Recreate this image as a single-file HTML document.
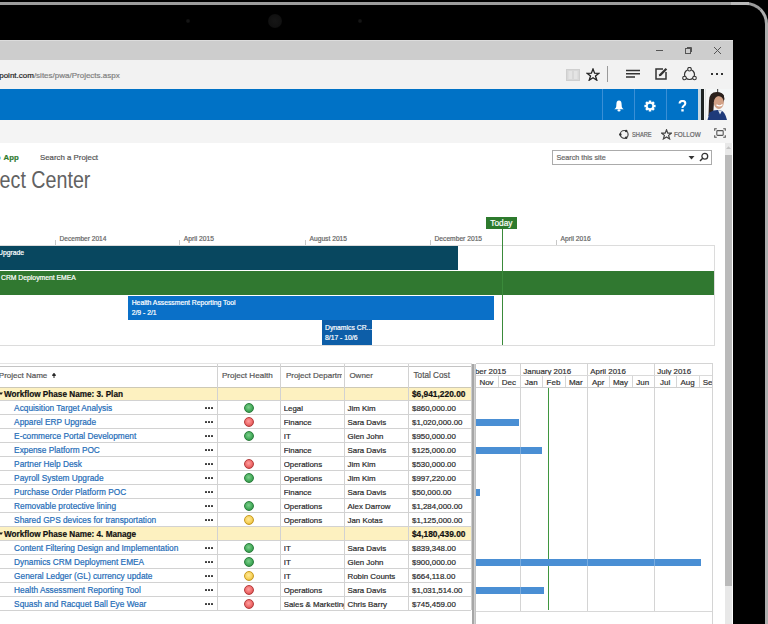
<!DOCTYPE html>
<html><head><meta charset="utf-8"><style>
html,body{margin:0;padding:0;}
body{width:768px;height:624px;overflow:hidden;background:#000;position:relative;font-family:"Liberation Sans", sans-serif;}
.r{position:absolute;}
.t{position:absolute;line-height:1;white-space:nowrap;-webkit-text-stroke:0.2px currentColor;}
</style></head><body>
<div class="r" style="left:-10px;top:2px;width:778px;height:700px;box-sizing:border-box;border-top:3px solid #9c9c9c;border-right:3.5px solid #adadad;border-top-right-radius:22px;"></div>
<div class="r" style="left:731px;top:2px;width:18px;height:3px;background:#b9b9b9;"></div>
<div class="r" style="left:268px;top:14px;width:14px;height:14px;border-radius:50%;background:radial-gradient(circle,#161616 0%,#111 60%,#060606 100%)"></div>
<div class="r" style="left:186px;top:19px;width:4px;height:4px;border-radius:50%;background:radial-gradient(circle,#181818,#0a0a0a)"></div>
<div class="r" style="left:358px;top:19px;width:4px;height:4px;border-radius:50%;background:radial-gradient(circle,#181818,#0a0a0a)"></div>
<div class="r" style="left:0px;top:40px;width:733px;height:584px;background:#ffffff;"></div>
<div class="r" style="left:0px;top:40px;width:733px;height:20px;background:#cdcdcd;"></div>
<div class="r" style="left:0px;top:40px;width:733px;height:1px;background:#dcdcdc;"></div>
<div class="r" style="left:0px;top:60px;width:733px;height:29px;background:#f2f2f2;"></div>
<div class="r" style="left:0px;top:89px;width:733px;height:31px;background:#0072c6;"></div>
<div class="r" style="left:0px;top:120px;width:733px;height:23px;background:#f4f4f4;"></div>
<div class="r" style="left:655.5px;top:50px;width:7px;height:1px;background:#555;"></div>
<svg class="r" style="left:684px;top:46px" width="9" height="9"><rect x="1.5" y="2.5" width="5" height="5" fill="none" stroke="#555" stroke-width="1"/><path d="M3 1.5H7.5V6" fill="none" stroke="#555" stroke-width="1"/></svg>
<svg class="r" style="left:713px;top:46px" width="9" height="9"><path d="M1 1L8 8M8 1L1 8" stroke="#555" stroke-width="1"/></svg>
<div class="t" style="left:-0.8px;top:71.80px;font-size:8px;color:#222">point.com<span style="color:#808080">/sites/pwa/Projects.aspx</span></div>
<svg class="r" style="left:566px;top:69px" width="14" height="12"><rect x="0.5" y="0.5" width="13" height="11" fill="#d8d8d8" stroke="#cfcfcf"/><rect x="2.5" y="2" width="3.5" height="8" fill="#e4e4e4"/><rect x="8" y="2" width="3.5" height="8" fill="#e4e4e4"/></svg>
<svg class="r" style="left:586px;top:67.5px" width="14" height="13"><path d="M7 1L8.6 5.2L13 5.3L9.5 8L10.8 12.2L7 9.7L3.2 12.2L4.5 8L1 5.3L5.4 5.2Z" fill="none" stroke="#222" stroke-width="1.3" stroke-linejoin="miter"/></svg>
<div class="r" style="left:606.5px;top:66px;width:1px;height:16px;background:#9a9a9a;"></div>
<svg class="r" style="left:625px;top:69px" width="16" height="10"><path d="M1 1.5H15M1 4.75H15M1 8H10" stroke="#333" stroke-width="1.3"/></svg>
<svg class="r" style="left:655px;top:66.5px" width="13" height="13"><path d="M8 2H1V12H11V5" fill="none" stroke="#333" stroke-width="1.5"/><path d="M3.8 9.2L4.3 7.3L10.6 1L12.2 2.6L5.9 8.9Z" fill="#333"/></svg>
<svg class="r" style="left:682px;top:67px" width="15" height="14"><circle cx="7.5" cy="7.5" r="5" fill="none" stroke="#333" stroke-width="1.2"/><circle cx="7.5" cy="2.2" r="1.8" fill="#f2f2f2" stroke="#333" stroke-width="1.1"/><circle cx="2.5" cy="11" r="1.8" fill="#f2f2f2" stroke="#333" stroke-width="1.1"/><circle cx="12.5" cy="11" r="1.8" fill="#f2f2f2" stroke="#333" stroke-width="1.1"/></svg>
<div class="r" style="left:711.25px;top:73.25px;width:1.5px;height:1.5px;background:#333;"></div>
<div class="r" style="left:716.25px;top:73.25px;width:1.5px;height:1.5px;background:#333;"></div>
<div class="r" style="left:721.25px;top:73.25px;width:1.5px;height:1.5px;background:#333;"></div>
<div class="r" style="left:602px;top:89px;width:1px;height:31px;background:#3a8fd6;"></div>
<div class="r" style="left:634px;top:89px;width:1px;height:31px;background:#3a8fd6;"></div>
<div class="r" style="left:666px;top:89px;width:1px;height:31px;background:#3a8fd6;"></div>
<svg class="r" style="left:613.5px;top:99.5px" width="10" height="12"><path d="M5 0.4C3.1 0.4 2.4 2 2.4 4.2L2.2 6.8C2 8 1.1 8.7 0.3 9.3H9.7C8.9 8.7 8 8 7.8 6.8L7.6 4.2C7.6 2 6.9 0.4 5 0.4Z" fill="#fff"/><ellipse cx="5" cy="10.4" rx="1.6" ry="1.1" fill="#fff"/></svg>
<svg class="r" style="left:644px;top:99.5px" width="12" height="12"><g fill="#fff" transform="translate(6 6)"><circle r="4.1"/><rect x="-1.3" y="-5.6" width="2.6" height="11.2" rx="0.4"/><rect x="-1.3" y="-5.6" width="2.6" height="11.2" rx="0.4" transform="rotate(45)"/><rect x="-1.3" y="-5.6" width="2.6" height="11.2" rx="0.4" transform="rotate(90)"/><rect x="-1.3" y="-5.6" width="2.6" height="11.2" rx="0.4" transform="rotate(135)"/></g><circle cx="6" cy="6" r="2.3" fill="#0072c6"/></svg>
<svg class="r" style="left:677.5px;top:99.5px" width="9" height="12"><path d="M1.6 3.6C1.6 1.9 2.8 1 4.4 1C6.1 1 7.3 1.9 7.3 3.5C7.3 4.8 6.4 5.4 5.5 6C4.8 6.5 4.5 6.9 4.5 8" fill="none" stroke="#fff" stroke-width="2.1"/><rect x="3.3" y="9.2" width="2.4" height="2.3" fill="#fff"/></svg>
<div class="r" style="left:698px;top:89px;width:35px;height:31px;background:#f4f6f6;"></div>
<div class="r" style="left:698px;top:89px;width:3px;height:31px;background:#c9d8e2;"></div>
<div class="r" style="left:701px;top:89px;width:3px;height:31px;background:#1d2424;"></div>
<div class="r" style="left:704.5px;top:89px;width:1px;height:31px;background:#dfe4e4;"></div>
<svg class="r" style="left:704.5px;top:89px" width="28" height="31"><rect x="12" y="0" width="1.2" height="4" fill="#555"/><path d="M3.5 27L4 12Q4 3 12 3Q19 3 19.5 10L18 14L9 13L8 27Z" fill="#2b211d"/><ellipse cx="13.8" cy="13.5" rx="5" ry="6.4" fill="#d2a186"/><path d="M8.5 9Q11 5.5 18.5 8.5L18.8 6Q15 2.5 10 4Z" fill="#2b211d"/><path d="M11.5 15.8Q14.5 18.2 17.5 15.5" stroke="#fff" stroke-width="1.3" fill="none"/><path d="M2.5 31L4.5 23.5Q10 20 16 21.5Q20 22.5 22 31Z" fill="#1e3a7a"/><path d="M13 21.2L15 25.5L17 21.8Z" fill="#dfe6ef"/></svg>
<svg class="r" style="left:618.5px;top:129px" width="11" height="11"><circle cx="5.2" cy="5.4" r="3.9" fill="none" stroke="#444" stroke-width="1.2"/><circle cx="7.2" cy="2" r="1.25" fill="#333"/><circle cx="1.3" cy="5.4" r="1.25" fill="#333"/><circle cx="7.2" cy="8.8" r="1.25" fill="#333"/></svg>
<div class="t" style="left:632.00px;top:131.80px;font-size:6.8px;color:#666;font-weight:400;transform:scaleX(0.84);transform-origin:left top;">SHARE</div>
<svg class="r" style="left:661px;top:129px" width="11" height="11"><path d="M5.5 0.8L6.8 4.1L10.3 4.2L7.6 6.4L8.6 9.9L5.5 7.9L2.4 9.9L3.4 6.4L0.7 4.2L4.2 4.1Z" fill="none" stroke="#444" stroke-width="1.2"/></svg>
<div class="t" style="left:673.80px;top:131.80px;font-size:6.8px;color:#666;font-weight:400;transform:scaleX(0.93);transform-origin:left top;">FOLLOW</div>
<svg class="r" style="left:713.5px;top:128px" width="12" height="10"><path d="M0.7 2.8V0.7H2.8M9.2 0.7H11.3V2.8M11.3 7.2V9.3H9.2M2.8 9.3H0.7V7.2" fill="none" stroke="#555" stroke-width="1.1"/><rect x="2.8" y="2.6" width="6.4" height="4.8" rx="0.8" fill="none" stroke="#555" stroke-width="1.1"/></svg>
<div class="r" style="left:725px;top:143px;width:7px;height:481px;background:#e8e8e8;"></div>
<div class="r" style="left:725px;top:155.3px;width:7px;height:431px;background:#bababa;"></div>
<svg class="r" style="left:725px;top:145px" width="7" height="5"><path d="M1 4L3.5 1.2L6 4Z" fill="#c4c4c4"/></svg>
<div class="t" style="left:-4.30px;top:153.80px;font-size:7.8px;color:#2f7a2f;font-weight:700;">b</div>
<div class="t" style="left:3.60px;top:153.80px;font-size:7.8px;color:#2f7a2f;font-weight:700;">App</div>
<div class="t" style="left:40.00px;top:154.20px;font-size:7.85px;color:#555;font-weight:400;">Search a Project</div>
<div class="t" style="right:677.50px;top:168.00px;font-size:24px;color:#626262;font-weight:400;transform:scaleX(0.82);transform-origin:right top;-webkit-text-stroke:0;">Project Center</div>
<div class="r" style="left:552px;top:150px;width:160px;height:15px;box-sizing:border-box;border:1px solid #ababab;background:#fff"></div>
<div class="t" style="left:556.50px;top:154.30px;font-size:7.2px;color:#666;font-weight:400;">Search this site</div>
<svg class="r" style="left:688px;top:155px" width="7" height="5"><path d="M0.5 1H6.5L3.5 4.5Z" fill="#333"/></svg>
<svg class="r" style="left:699px;top:152px" width="10" height="10"><circle cx="5.8" cy="4.2" r="2.9" fill="none" stroke="#333" stroke-width="1.3"/><path d="M3.7 6.3L1 9" stroke="#333" stroke-width="1.5"/></svg>
<div class="r" style="left:-10px;top:245px;width:725px;height:101px;box-sizing:border-box;border:1px solid #dcdcdc;"></div>
<div class="r" style="left:55px;top:239.5px;width:1px;height:5.5px;background:#c8c8c8;"></div>
<div class="t" style="left:59.50px;top:235.70px;font-size:6.6px;color:#666;font-weight:400;">December 2014</div>
<div class="r" style="left:179.3px;top:239.5px;width:1px;height:5.5px;background:#c8c8c8;"></div>
<div class="t" style="left:183.80px;top:235.70px;font-size:6.7px;color:#666;font-weight:400;">April 2015</div>
<div class="r" style="left:305px;top:239.5px;width:1px;height:5.5px;background:#c8c8c8;"></div>
<div class="t" style="left:309.50px;top:235.70px;font-size:6.7px;color:#666;font-weight:400;">August 2015</div>
<div class="r" style="left:430px;top:239.5px;width:1px;height:5.5px;background:#c8c8c8;"></div>
<div class="t" style="left:434.50px;top:235.70px;font-size:6.7px;color:#666;font-weight:400;">December 2015</div>
<div class="r" style="left:556px;top:239.5px;width:1px;height:5.5px;background:#c8c8c8;"></div>
<div class="t" style="left:560.50px;top:235.70px;font-size:6.7px;color:#666;font-weight:400;">April 2016</div>
<div class="r" style="left:0px;top:246px;width:458.3px;height:23.8px;background:#08475f;"></div>
<div class="t" style="left:-2.00px;top:249.70px;font-size:6.8px;color:#fff;font-weight:400;">Upgrade</div>
<div class="r" style="left:0px;top:271px;width:714px;height:24px;background:#307830;"></div>
<div class="t" style="left:1.00px;top:275.00px;font-size:6.8px;color:#fff;font-weight:400;">CRM Deployment EMEA</div>
<div class="r" style="left:127.5px;top:295.5px;width:366.8px;height:24.5px;background:#0a70c8;"></div>
<div class="t" style="left:131.70px;top:300.00px;font-size:6.8px;color:#fff;font-weight:400;">Health Assessment Reporting Tool</div>
<div class="t" style="left:131.70px;top:310.30px;font-size:6.8px;color:#fff;font-weight:400;">2/9 - 2/1</div>
<div class="r" style="left:321.9px;top:320.4px;width:50.6px;height:24.2px;background:#0d5ea8;"></div>
<div class="t" style="left:325.00px;top:325.30px;font-size:6.8px;color:#fff;font-weight:400;">Dynamics CR...</div>
<div class="t" style="left:325.00px;top:335.40px;font-size:6.8px;color:#fff;font-weight:400;">8/17 - 10/6</div>
<div class="r" style="left:501.5px;top:229px;width:1.2px;height:116px;background:#3a8a3a;"></div>
<div class="r" style="left:486.2px;top:216.7px;width:30.8px;height:12.8px;background:#2d7a2d;"></div>
<div class="t" style="left:490.30px;top:219.30px;font-size:8.3px;color:#fff;font-weight:400;">Today</div>
<div class="r" style="left:-5px;top:363px;width:477px;height:1px;background:#e4e4e4;"></div>
<div class="r" style="left:-5px;top:366px;width:477px;height:1px;background:#c4c4c4;"></div>
<div class="r" style="left:476px;top:363px;width:237px;height:1px;background:#d4d4d4;"></div>
<div class="t" style="left:-1.20px;top:372.30px;font-size:8px;color:#555;font-weight:400;">Project Name</div>
<svg class="r" style="left:51.5px;top:372.5px" width="4" height="5.5"><path d="M2 5.2V2M0.4 2.4L2 0.3L3.6 2.4Z" stroke="#222" stroke-width="1" fill="#222"/></svg>
<div class="t" style="left:221.90px;top:372.40px;font-size:8.1px;color:#555;font-weight:400;">Project Health</div>
<div class="t" style="left:285.9px;top:372.40px;font-size:8px;color:#555;width:56.5px;overflow:hidden">Project Department</div>
<div class="t" style="left:349.40px;top:372.40px;font-size:8px;color:#555;font-weight:400;">Owner</div>
<div class="t" style="left:413.50px;top:372.40px;font-size:8.2px;color:#555;font-weight:400;">Total Cost</div>
<div class="r" style="left:-5px;top:387px;width:477px;height:1px;background:#cdc9b6;"></div>
<div class="r" style="left:-5px;top:388px;width:477px;height:12px;background:#fdf1c0;"></div>
<svg class="r" style="left:-1px;top:392.00px" width="4" height="4"><path d="M0 0.5H4L2 3Z" fill="#222"/></svg>
<div class="t" style="left:3.90px;top:391.00px;font-size:8.2px;color:#111;font-weight:700;">Workflow Phase Name: 3. Plan</div>
<div class="t" style="left:411.90px;top:390.00px;font-size:8.4px;color:#111;font-weight:700;">$6,941,220.00</div>
<div class="r" style="left:-5px;top:400px;width:476px;height:1px;background:#d2d2d2;"></div>
<div class="t" style="left:14.10px;top:404.00px;font-size:8.3px;color:#1f6db8;font-weight:400;">Acquisition Target Analysis</div>
<div class="r" style="left:205px;top:407px;width:2px;height:2px;background:#3a3a3a;border-radius:0.5px;"></div>
<div class="r" style="left:208px;top:407px;width:2px;height:2px;background:#3a3a3a;border-radius:0.5px;"></div>
<div class="r" style="left:211px;top:407px;width:2px;height:2px;background:#3a3a3a;border-radius:0.5px;"></div>
<div class="r" style="left:243.50px;top:402.50px;width:10px;height:10px;border-radius:50%;box-sizing:border-box;border:1px solid #2b7d3c;background:radial-gradient(circle at 45% 40%, #7fcf8c 0%, #45ad5c 55%, #2b7d3c 100%)"></div>
<div class="t" style="left:283.75px;top:405.00px;font-size:7.85px;color:#2a2a2a;width:60.5px;overflow:hidden">Legal</div>
<div class="t" style="left:347.50px;top:405.00px;font-size:7.9px;color:#2a2a2a;font-weight:400;">Jim Kim</div>
<div class="t" style="left:412.00px;top:405.00px;font-size:7.9px;color:#2a2a2a;font-weight:400;">$860,000.00</div>
<div class="r" style="left:-5px;top:414px;width:476px;height:1px;background:#d2d2d2;"></div>
<div class="t" style="left:14.10px;top:418.00px;font-size:8.3px;color:#1f6db8;font-weight:400;">Apparel ERP Upgrade</div>
<div class="r" style="left:205px;top:421px;width:2px;height:2px;background:#3a3a3a;border-radius:0.5px;"></div>
<div class="r" style="left:208px;top:421px;width:2px;height:2px;background:#3a3a3a;border-radius:0.5px;"></div>
<div class="r" style="left:211px;top:421px;width:2px;height:2px;background:#3a3a3a;border-radius:0.5px;"></div>
<div class="r" style="left:243.50px;top:416.50px;width:10px;height:10px;border-radius:50%;box-sizing:border-box;border:1px solid #b53a3a;background:radial-gradient(circle at 45% 40%, #ffa0a0 0%, #ef6a6a 55%, #b53a3a 100%)"></div>
<div class="t" style="left:283.75px;top:419.00px;font-size:7.85px;color:#2a2a2a;width:60.5px;overflow:hidden">Finance</div>
<div class="t" style="left:347.50px;top:419.00px;font-size:7.9px;color:#2a2a2a;font-weight:400;">Sara Davis</div>
<div class="t" style="left:412.00px;top:419.00px;font-size:7.9px;color:#2a2a2a;font-weight:400;">$1,020,000.00</div>
<div class="r" style="left:-5px;top:428px;width:476px;height:1px;background:#d2d2d2;"></div>
<div class="t" style="left:14.10px;top:432.00px;font-size:8.3px;color:#1f6db8;font-weight:400;">E-commerce Portal Development</div>
<div class="r" style="left:205px;top:435px;width:2px;height:2px;background:#3a3a3a;border-radius:0.5px;"></div>
<div class="r" style="left:208px;top:435px;width:2px;height:2px;background:#3a3a3a;border-radius:0.5px;"></div>
<div class="r" style="left:211px;top:435px;width:2px;height:2px;background:#3a3a3a;border-radius:0.5px;"></div>
<div class="r" style="left:243.50px;top:430.50px;width:10px;height:10px;border-radius:50%;box-sizing:border-box;border:1px solid #2b7d3c;background:radial-gradient(circle at 45% 40%, #7fcf8c 0%, #45ad5c 55%, #2b7d3c 100%)"></div>
<div class="t" style="left:283.75px;top:433.00px;font-size:7.85px;color:#2a2a2a;width:60.5px;overflow:hidden">IT</div>
<div class="t" style="left:347.50px;top:433.00px;font-size:7.9px;color:#2a2a2a;font-weight:400;">Glen John</div>
<div class="t" style="left:412.00px;top:433.00px;font-size:7.9px;color:#2a2a2a;font-weight:400;">$950,000.00</div>
<div class="r" style="left:-5px;top:442px;width:476px;height:1px;background:#d2d2d2;"></div>
<div class="t" style="left:14.10px;top:446.00px;font-size:8.3px;color:#1f6db8;font-weight:400;">Expense Platform POC</div>
<div class="r" style="left:205px;top:449px;width:2px;height:2px;background:#3a3a3a;border-radius:0.5px;"></div>
<div class="r" style="left:208px;top:449px;width:2px;height:2px;background:#3a3a3a;border-radius:0.5px;"></div>
<div class="r" style="left:211px;top:449px;width:2px;height:2px;background:#3a3a3a;border-radius:0.5px;"></div>
<div class="t" style="left:283.75px;top:447.00px;font-size:7.85px;color:#2a2a2a;width:60.5px;overflow:hidden">Finance</div>
<div class="t" style="left:347.50px;top:447.00px;font-size:7.9px;color:#2a2a2a;font-weight:400;">Sara Davis</div>
<div class="t" style="left:412.00px;top:447.00px;font-size:7.9px;color:#2a2a2a;font-weight:400;">$125,000.00</div>
<div class="r" style="left:-5px;top:456px;width:476px;height:1px;background:#d2d2d2;"></div>
<div class="t" style="left:14.10px;top:460.00px;font-size:8.3px;color:#1f6db8;font-weight:400;">Partner Help Desk</div>
<div class="r" style="left:205px;top:463px;width:2px;height:2px;background:#3a3a3a;border-radius:0.5px;"></div>
<div class="r" style="left:208px;top:463px;width:2px;height:2px;background:#3a3a3a;border-radius:0.5px;"></div>
<div class="r" style="left:211px;top:463px;width:2px;height:2px;background:#3a3a3a;border-radius:0.5px;"></div>
<div class="r" style="left:243.50px;top:458.50px;width:10px;height:10px;border-radius:50%;box-sizing:border-box;border:1px solid #b53a3a;background:radial-gradient(circle at 45% 40%, #ffa0a0 0%, #ef6a6a 55%, #b53a3a 100%)"></div>
<div class="t" style="left:283.75px;top:461.00px;font-size:7.85px;color:#2a2a2a;width:60.5px;overflow:hidden">Operations</div>
<div class="t" style="left:347.50px;top:461.00px;font-size:7.9px;color:#2a2a2a;font-weight:400;">Jim Kim</div>
<div class="t" style="left:412.00px;top:461.00px;font-size:7.9px;color:#2a2a2a;font-weight:400;">$530,000.00</div>
<div class="r" style="left:-5px;top:470px;width:476px;height:1px;background:#d2d2d2;"></div>
<div class="t" style="left:14.10px;top:474.00px;font-size:8.3px;color:#1f6db8;font-weight:400;">Payroll System Upgrade</div>
<div class="r" style="left:205px;top:477px;width:2px;height:2px;background:#3a3a3a;border-radius:0.5px;"></div>
<div class="r" style="left:208px;top:477px;width:2px;height:2px;background:#3a3a3a;border-radius:0.5px;"></div>
<div class="r" style="left:211px;top:477px;width:2px;height:2px;background:#3a3a3a;border-radius:0.5px;"></div>
<div class="r" style="left:243.50px;top:472.50px;width:10px;height:10px;border-radius:50%;box-sizing:border-box;border:1px solid #2b7d3c;background:radial-gradient(circle at 45% 40%, #7fcf8c 0%, #45ad5c 55%, #2b7d3c 100%)"></div>
<div class="t" style="left:283.75px;top:475.00px;font-size:7.85px;color:#2a2a2a;width:60.5px;overflow:hidden">Operations</div>
<div class="t" style="left:347.50px;top:475.00px;font-size:7.9px;color:#2a2a2a;font-weight:400;">Jim Kim</div>
<div class="t" style="left:412.00px;top:475.00px;font-size:7.9px;color:#2a2a2a;font-weight:400;">$997,220.00</div>
<div class="r" style="left:-5px;top:484px;width:476px;height:1px;background:#d2d2d2;"></div>
<div class="t" style="left:14.10px;top:488.00px;font-size:8.3px;color:#1f6db8;font-weight:400;">Purchase Order Platform POC</div>
<div class="r" style="left:205px;top:491px;width:2px;height:2px;background:#3a3a3a;border-radius:0.5px;"></div>
<div class="r" style="left:208px;top:491px;width:2px;height:2px;background:#3a3a3a;border-radius:0.5px;"></div>
<div class="r" style="left:211px;top:491px;width:2px;height:2px;background:#3a3a3a;border-radius:0.5px;"></div>
<div class="t" style="left:283.75px;top:489.00px;font-size:7.85px;color:#2a2a2a;width:60.5px;overflow:hidden">Finance</div>
<div class="t" style="left:347.50px;top:489.00px;font-size:7.9px;color:#2a2a2a;font-weight:400;">Sara Davis</div>
<div class="t" style="left:412.00px;top:489.00px;font-size:7.9px;color:#2a2a2a;font-weight:400;">$50,000.00</div>
<div class="r" style="left:-5px;top:498px;width:476px;height:1px;background:#d2d2d2;"></div>
<div class="t" style="left:14.10px;top:502.00px;font-size:8.3px;color:#1f6db8;font-weight:400;">Removable protective lining</div>
<div class="r" style="left:205px;top:505px;width:2px;height:2px;background:#3a3a3a;border-radius:0.5px;"></div>
<div class="r" style="left:208px;top:505px;width:2px;height:2px;background:#3a3a3a;border-radius:0.5px;"></div>
<div class="r" style="left:211px;top:505px;width:2px;height:2px;background:#3a3a3a;border-radius:0.5px;"></div>
<div class="r" style="left:243.50px;top:500.50px;width:10px;height:10px;border-radius:50%;box-sizing:border-box;border:1px solid #2b7d3c;background:radial-gradient(circle at 45% 40%, #7fcf8c 0%, #45ad5c 55%, #2b7d3c 100%)"></div>
<div class="t" style="left:283.75px;top:503.00px;font-size:7.85px;color:#2a2a2a;width:60.5px;overflow:hidden">Operations</div>
<div class="t" style="left:347.50px;top:503.00px;font-size:7.9px;color:#2a2a2a;font-weight:400;">Alex Darrow</div>
<div class="t" style="left:412.00px;top:503.00px;font-size:7.9px;color:#2a2a2a;font-weight:400;">$1,284,000.00</div>
<div class="r" style="left:-5px;top:512px;width:476px;height:1px;background:#d2d2d2;"></div>
<div class="t" style="left:14.10px;top:516.00px;font-size:8.3px;color:#1f6db8;font-weight:400;">Shared GPS devices for transportation</div>
<div class="r" style="left:205px;top:519px;width:2px;height:2px;background:#3a3a3a;border-radius:0.5px;"></div>
<div class="r" style="left:208px;top:519px;width:2px;height:2px;background:#3a3a3a;border-radius:0.5px;"></div>
<div class="r" style="left:211px;top:519px;width:2px;height:2px;background:#3a3a3a;border-radius:0.5px;"></div>
<div class="r" style="left:243.50px;top:514.50px;width:10px;height:10px;border-radius:50%;box-sizing:border-box;border:1px solid #c89a20;background:radial-gradient(circle at 45% 40%, #ffe99a 0%, #f7d25a 55%, #c89a20 100%)"></div>
<div class="t" style="left:283.75px;top:517.00px;font-size:7.85px;color:#2a2a2a;width:60.5px;overflow:hidden">Operations</div>
<div class="t" style="left:347.50px;top:517.00px;font-size:7.9px;color:#2a2a2a;font-weight:400;">Jan Kotas</div>
<div class="t" style="left:412.00px;top:517.00px;font-size:7.9px;color:#2a2a2a;font-weight:400;">$1,125,000.00</div>
<div class="r" style="left:-5px;top:526px;width:476px;height:1px;background:#d2d2d2;"></div>
<div class="r" style="left:-5px;top:527px;width:477px;height:13px;background:#fdf1c0;"></div>
<svg class="r" style="left:-1px;top:531.50px" width="4" height="4"><path d="M0 0.5H4L2 3Z" fill="#222"/></svg>
<div class="t" style="left:3.90px;top:531.00px;font-size:8.2px;color:#111;font-weight:700;">Workflow Phase Name: 4. Manage</div>
<div class="t" style="left:411.90px;top:530.00px;font-size:8.4px;color:#111;font-weight:700;">$4,180,439.00</div>
<div class="r" style="left:-5px;top:540px;width:476px;height:1px;background:#d2d2d2;"></div>
<div class="t" style="left:14.10px;top:544.00px;font-size:8.3px;color:#1f6db8;font-weight:400;">Content Filtering Design and Implementation</div>
<div class="r" style="left:205px;top:547px;width:2px;height:2px;background:#3a3a3a;border-radius:0.5px;"></div>
<div class="r" style="left:208px;top:547px;width:2px;height:2px;background:#3a3a3a;border-radius:0.5px;"></div>
<div class="r" style="left:211px;top:547px;width:2px;height:2px;background:#3a3a3a;border-radius:0.5px;"></div>
<div class="r" style="left:243.50px;top:542.50px;width:10px;height:10px;border-radius:50%;box-sizing:border-box;border:1px solid #2b7d3c;background:radial-gradient(circle at 45% 40%, #7fcf8c 0%, #45ad5c 55%, #2b7d3c 100%)"></div>
<div class="t" style="left:283.75px;top:545.00px;font-size:7.85px;color:#2a2a2a;width:60.5px;overflow:hidden">IT</div>
<div class="t" style="left:347.50px;top:545.00px;font-size:7.9px;color:#2a2a2a;font-weight:400;">Sara Davis</div>
<div class="t" style="left:412.00px;top:545.00px;font-size:7.9px;color:#2a2a2a;font-weight:400;">$839,348.00</div>
<div class="r" style="left:-5px;top:554px;width:476px;height:1px;background:#d2d2d2;"></div>
<div class="t" style="left:14.10px;top:558.00px;font-size:8.3px;color:#1f6db8;font-weight:400;">Dynamics CRM Deployment EMEA</div>
<div class="r" style="left:205px;top:561px;width:2px;height:2px;background:#3a3a3a;border-radius:0.5px;"></div>
<div class="r" style="left:208px;top:561px;width:2px;height:2px;background:#3a3a3a;border-radius:0.5px;"></div>
<div class="r" style="left:211px;top:561px;width:2px;height:2px;background:#3a3a3a;border-radius:0.5px;"></div>
<div class="r" style="left:243.50px;top:556.50px;width:10px;height:10px;border-radius:50%;box-sizing:border-box;border:1px solid #2b7d3c;background:radial-gradient(circle at 45% 40%, #7fcf8c 0%, #45ad5c 55%, #2b7d3c 100%)"></div>
<div class="t" style="left:283.75px;top:559.00px;font-size:7.85px;color:#2a2a2a;width:60.5px;overflow:hidden">IT</div>
<div class="t" style="left:347.50px;top:559.00px;font-size:7.9px;color:#2a2a2a;font-weight:400;">Glen John</div>
<div class="t" style="left:412.00px;top:559.00px;font-size:7.9px;color:#2a2a2a;font-weight:400;">$900,000.00</div>
<div class="r" style="left:-5px;top:568px;width:476px;height:1px;background:#d2d2d2;"></div>
<div class="t" style="left:14.10px;top:572.00px;font-size:8.3px;color:#1f6db8;font-weight:400;">General Ledger (GL) currency update</div>
<div class="r" style="left:205px;top:575px;width:2px;height:2px;background:#3a3a3a;border-radius:0.5px;"></div>
<div class="r" style="left:208px;top:575px;width:2px;height:2px;background:#3a3a3a;border-radius:0.5px;"></div>
<div class="r" style="left:211px;top:575px;width:2px;height:2px;background:#3a3a3a;border-radius:0.5px;"></div>
<div class="r" style="left:243.50px;top:570.50px;width:10px;height:10px;border-radius:50%;box-sizing:border-box;border:1px solid #c89a20;background:radial-gradient(circle at 45% 40%, #ffe99a 0%, #f7d25a 55%, #c89a20 100%)"></div>
<div class="t" style="left:283.75px;top:573.00px;font-size:7.85px;color:#2a2a2a;width:60.5px;overflow:hidden">IT</div>
<div class="t" style="left:347.50px;top:573.00px;font-size:7.9px;color:#2a2a2a;font-weight:400;">Robin Counts</div>
<div class="t" style="left:412.00px;top:573.00px;font-size:7.9px;color:#2a2a2a;font-weight:400;">$664,118.00</div>
<div class="r" style="left:-5px;top:582px;width:476px;height:1px;background:#d2d2d2;"></div>
<div class="t" style="left:14.10px;top:586.00px;font-size:8.3px;color:#1f6db8;font-weight:400;">Health Assessment Reporting Tool</div>
<div class="r" style="left:205px;top:589px;width:2px;height:2px;background:#3a3a3a;border-radius:0.5px;"></div>
<div class="r" style="left:208px;top:589px;width:2px;height:2px;background:#3a3a3a;border-radius:0.5px;"></div>
<div class="r" style="left:211px;top:589px;width:2px;height:2px;background:#3a3a3a;border-radius:0.5px;"></div>
<div class="r" style="left:243.50px;top:584.50px;width:10px;height:10px;border-radius:50%;box-sizing:border-box;border:1px solid #b53a3a;background:radial-gradient(circle at 45% 40%, #ffa0a0 0%, #ef6a6a 55%, #b53a3a 100%)"></div>
<div class="t" style="left:283.75px;top:587.00px;font-size:7.85px;color:#2a2a2a;width:60.5px;overflow:hidden">Operations</div>
<div class="t" style="left:347.50px;top:587.00px;font-size:7.9px;color:#2a2a2a;font-weight:400;">Sara Davis</div>
<div class="t" style="left:412.00px;top:587.00px;font-size:7.9px;color:#2a2a2a;font-weight:400;">$1,031,514.00</div>
<div class="r" style="left:-5px;top:596px;width:476px;height:1px;background:#d2d2d2;"></div>
<div class="t" style="left:14.10px;top:600.00px;font-size:8.3px;color:#1f6db8;font-weight:400;">Squash and Racquet Ball Eye Wear</div>
<div class="r" style="left:205px;top:603px;width:2px;height:2px;background:#3a3a3a;border-radius:0.5px;"></div>
<div class="r" style="left:208px;top:603px;width:2px;height:2px;background:#3a3a3a;border-radius:0.5px;"></div>
<div class="r" style="left:211px;top:603px;width:2px;height:2px;background:#3a3a3a;border-radius:0.5px;"></div>
<div class="r" style="left:243.50px;top:598.50px;width:10px;height:10px;border-radius:50%;box-sizing:border-box;border:1px solid #b53a3a;background:radial-gradient(circle at 45% 40%, #ffa0a0 0%, #ef6a6a 55%, #b53a3a 100%)"></div>
<div class="t" style="left:283.75px;top:601.00px;font-size:7.85px;color:#2a2a2a;width:60.5px;overflow:hidden">Sales &amp; Marketing</div>
<div class="t" style="left:347.50px;top:601.00px;font-size:7.9px;color:#2a2a2a;font-weight:400;">Chris Barry</div>
<div class="t" style="left:412.00px;top:601.00px;font-size:7.9px;color:#2a2a2a;font-weight:400;">$745,459.00</div>
<div class="r" style="left:-5px;top:610px;width:476px;height:1px;background:#d2d2d2;"></div>
<div class="r" style="left:217px;top:364px;width:1px;height:246px;background:#d2d2d2;"></div>
<div class="r" style="left:280px;top:364px;width:1px;height:246px;background:#d2d2d2;"></div>
<div class="r" style="left:344px;top:364px;width:1px;height:246px;background:#d2d2d2;"></div>
<div class="r" style="left:408px;top:364px;width:1px;height:246px;background:#d2d2d2;"></div>
<div class="r" style="left:471px;top:364px;width:1px;height:246px;background:#cfcfcf;"></div>
<div class="r" style="left:472px;top:364px;width:2px;height:260px;background:#a6a6a6;"></div>
<div class="r" style="left:474px;top:364px;width:1px;height:260px;background:#d0d0d0;"></div>
<div class="r" style="left:475px;top:364px;width:1px;height:260px;background:#c2c2c2;"></div>
<div class="r" style="left:476px;top:364px;width:237px;height:260px;overflow:hidden">
<div class="r" style="left:-23.00px;top:0px;width:1px;height:247px;background:#d4d4d4"></div>
<div class="t" style="left:-17.70px;top:3.50px;font-size:7.9px;color:#333">October 2015</div>
<div class="r" style="left:44.00px;top:0px;width:1px;height:247px;background:#d4d4d4"></div>
<div class="t" style="left:47.30px;top:3.50px;font-size:7.9px;color:#333">January 2016</div>
<div class="r" style="left:111.00px;top:0px;width:1px;height:247px;background:#d4d4d4"></div>
<div class="t" style="left:114.30px;top:3.50px;font-size:7.9px;color:#333">April 2016</div>
<div class="r" style="left:178.00px;top:0px;width:1px;height:247px;background:#d4d4d4"></div>
<div class="t" style="left:181.30px;top:3.50px;font-size:7.9px;color:#333">July 2016</div>
<div class="t" style="left:-23.00px;width:22.33px;text-align:center;top:15.10px;font-size:8px;color:#333">Oct</div>
<div class="r" style="left:-0.67px;top:11px;width:1px;height:12px;background:#d6d6d6"></div>
<div class="t" style="left:-0.67px;width:22.33px;text-align:center;top:15.10px;font-size:8px;color:#333">Nov</div>
<div class="r" style="left:21.67px;top:11px;width:1px;height:12px;background:#d6d6d6"></div>
<div class="t" style="left:21.67px;width:22.33px;text-align:center;top:15.10px;font-size:8px;color:#333">Dec</div>
<div class="t" style="left:44.00px;width:22.33px;text-align:center;top:15.10px;font-size:8px;color:#333">Jan</div>
<div class="r" style="left:66.33px;top:11px;width:1px;height:12px;background:#d6d6d6"></div>
<div class="t" style="left:66.33px;width:22.33px;text-align:center;top:15.10px;font-size:8px;color:#333">Feb</div>
<div class="r" style="left:88.67px;top:11px;width:1px;height:12px;background:#d6d6d6"></div>
<div class="t" style="left:88.67px;width:22.33px;text-align:center;top:15.10px;font-size:8px;color:#333">Mar</div>
<div class="t" style="left:111.00px;width:22.33px;text-align:center;top:15.10px;font-size:8px;color:#333">Apr</div>
<div class="r" style="left:133.33px;top:11px;width:1px;height:12px;background:#d6d6d6"></div>
<div class="t" style="left:133.33px;width:22.33px;text-align:center;top:15.10px;font-size:8px;color:#333">May</div>
<div class="r" style="left:155.67px;top:11px;width:1px;height:12px;background:#d6d6d6"></div>
<div class="t" style="left:155.67px;width:22.33px;text-align:center;top:15.10px;font-size:8px;color:#333">Jun</div>
<div class="t" style="left:178.00px;width:22.33px;text-align:center;top:15.10px;font-size:8px;color:#333">Jul</div>
<div class="r" style="left:200.33px;top:11px;width:1px;height:12px;background:#d6d6d6"></div>
<div class="t" style="left:200.33px;width:22.33px;text-align:center;top:15.10px;font-size:8px;color:#333">Aug</div>
<div class="r" style="left:222.67px;top:11px;width:1px;height:12px;background:#d6d6d6"></div>
<div class="t" style="left:222.67px;width:22.33px;text-align:center;top:15.10px;font-size:8px;color:#333">Sep</div>
<div class="r" style="left:0px;top:11px;width:237px;height:1px;background:#dadada"></div>
<div class="r" style="left:0px;top:23px;width:237px;height:1px;background:#cfcfcf"></div>
<div class="r" style="left:0px;top:247px;width:237px;height:1px;background:#d8d8d8"></div>
<div class="r" style="left:236px;top:0px;width:1px;height:260px;background:#d4d4d4"></div>
<div class="r" style="left:72px;top:24px;width:1px;height:222px;background:#3f963f"></div>
<div class="r" style="left:0px;top:54.50px;width:42.80px;height:7.6px;background:#4a8fd4"></div>
<div class="r" style="left:0px;top:82.50px;width:65.60px;height:7.6px;background:#4a8fd4"></div>
<div class="r" style="left:44.00px;top:82.50px;width:1px;height:7.6px;background:rgba(255,255,255,0.25)"></div>
<div class="r" style="left:0px;top:124.50px;width:4.30px;height:7.6px;background:#4a8fd4"></div>
<div class="r" style="left:0px;top:194.50px;width:224.80px;height:7.6px;background:#4a8fd4"></div>
<div class="r" style="left:44.00px;top:194.50px;width:1px;height:7.6px;background:rgba(255,255,255,0.25)"></div>
<div class="r" style="left:111.00px;top:194.50px;width:1px;height:7.6px;background:rgba(255,255,255,0.25)"></div>
<div class="r" style="left:178.00px;top:194.50px;width:1px;height:7.6px;background:rgba(255,255,255,0.25)"></div>
<div class="r" style="left:0px;top:222.50px;width:68.30px;height:7.6px;background:#4a8fd4"></div>
<div class="r" style="left:44.00px;top:222.50px;width:1px;height:7.6px;background:rgba(255,255,255,0.25)"></div>
</div>
</body></html>
